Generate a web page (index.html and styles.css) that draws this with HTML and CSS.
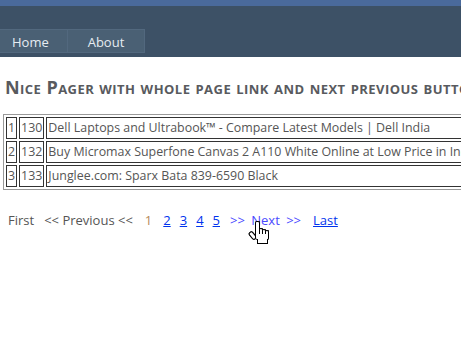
FILE: index.html
```html
<!DOCTYPE html>
<html>
<head>
<meta charset="utf-8">
<link rel="stylesheet" href="styles.css">
</head>
<body>
<header class="header">
  <nav class="nav">
    <a class="nav-item" href="#">Home</a>
    <a class="nav-item" href="#">About</a>
  </nav>
</header>
<main class="main">
  <h2 class="title">Nice Pager with whole page link and next previous buttons</h2>
  <table class="grid">
    <tr><td>1</td><td>130</td><td>Dell Laptops and Ultrabook™ - Compare Latest Models | Dell India</td></tr>
    <tr><td>2</td><td>132</td><td>Buy Micromax Superfone Canvas 2 A110 White Online at Low Price in India</td></tr>
    <tr><td>3</td><td>133</td><td>Junglee.com: Sparx Bata 839-6590 Black</td></tr>
  </table>
  <div class="pager">
    <span class="pg-off">First</span>
    <span class="pg-off">&lt;&lt; Previous &lt;&lt;</span>
    <span class="pg-cur">1</span>
    <a class="pg-num" href="#">2</a>
    <a class="pg-num" href="#">3</a>
    <a class="pg-num" href="#">4</a>
    <a class="pg-num" href="#">5</a>
    <a class="pg-next" href="#">&gt;&gt; Next &gt;&gt;</a>
    <a class="pg-num pg-last" href="#">Last</a>
  </div>
</main>
<div class="cursor">
  <div class="c-part c-thumb"></div>
  <div class="c-part c-f1"></div>
  <div class="c-part c-f2"></div>
  <div class="c-part c-f3"></div>
  <div class="c-part c-f4"></div>
  <div class="c-part c-palm"></div>
  <div class="c-part c-wrist"></div>
</div>
</body>
</html>
```
FILE: styles.css
```css
html, body {
  margin: 0;
  padding: 0;
  background: #fff;
}
body {
  position: relative;
  min-height: 356px;
  font-family: "Open Sans", "Noto Sans", sans-serif;
  font-size: 13px;
  color: #555;
}
.header {
  background: #3d5166;
  border-top: 6px solid #4a6a9c;
  height: 51px;
  display: flex;
  align-items: flex-end;
}
.nav {
  display: flex;
  margin-bottom: 4px;
}
.nav-item {
  display: block;
  height: 24px;
  line-height: 24px;
  background: #4a6074;
  border: 1px solid #52687e;
  color: #e6ecf2;
  text-decoration: none;
  font-size: 13px;
}
.nav-item:first-child {
  padding-left: 12px;
  box-sizing: border-box;
  width: 68px;
  border-left: none;
}
.nav-item + .nav-item {
  width: 77px;
  box-sizing: border-box;
  text-align: center;
  border-left: none;
}
.main {
  padding: 0 3px;
}
.title {
  margin: 19px 0 16px 2px;
  font-size: 18px;
  letter-spacing: 0.45px;
  font-variant: small-caps;
  font-weight: bold;
  color: #585a5e;
  white-space: nowrap;
  line-height: 22px;
}
.grid {
  border: 1px solid #999;
  border-spacing: 2px;
  white-space: nowrap;
  font-size: 12.4px;
  color: #555;
}
.grid td {
  border: 1px solid #333;
  padding: 0 1px;
  height: 20px;
  line-height: 20px;
}
.pager {
  display: flex;
  align-items: baseline;
  gap: 9px;
  margin: 21px 0 0 5px;
  font-size: 13px;
}
.pg-off { color: #555; }
.pg-off + .pg-off { margin-left: 1px; }
.pg-cur { color: #b5895a; margin: 0 2px 0 3px; }
.pg-num { color: #0033ee; }
.pg-next { color: #4a4aff; text-decoration: none; word-spacing: 3px; margin-left: 1px; }
.pg-last { margin-left: 3px; }

/* hand pointer overlay */
.cursor {
  position: absolute;
  z-index: 10;
  left: 251px;
  top: 221px;
  width: 18px;
  height: 23px;
  filter: drop-shadow(0.6px 0.6px 0 #222);
}
.c-part {
  position: absolute;
  box-sizing: border-box;
  background: #fff;
  border: 1px solid #000;
}
.c-thumb {
  left: 2px;
  top: 9px;
  width: 5px;
  height: 9px;
  border-radius: 2px;
  transform: rotate(-40deg);
  transform-origin: 50% 100%;
}
.c-f1 {
  left: 4px;
  top: 0;
  width: 5px;
  height: 15px;
  border-radius: 2px 2px 0 0;
  border-bottom: none;
}
.c-f2 {
  left: 8px;
  top: 7px;
  width: 4px;
  height: 8px;
  border-radius: 2px 2px 0 0;
  border-bottom: none;
}
.c-f3 {
  left: 11px;
  top: 8px;
  width: 4px;
  height: 8px;
  border-radius: 2px 2px 0 0;
  border-bottom: none;
}
.c-f4 {
  left: 14px;
  top: 9px;
  width: 4px;
  height: 8px;
  border-radius: 2px 2px 0 0;
  border-bottom: none;
}
.c-palm {
  left: 4px;
  top: 13px;
  width: 14px;
  height: 6px;
  border-top: none;
  border-bottom: none;
  border-radius: 0 0 2px 3px;
}
.c-wrist {
  left: 6px;
  top: 18px;
  width: 11px;
  height: 5px;
  border-top: none;
}
```
